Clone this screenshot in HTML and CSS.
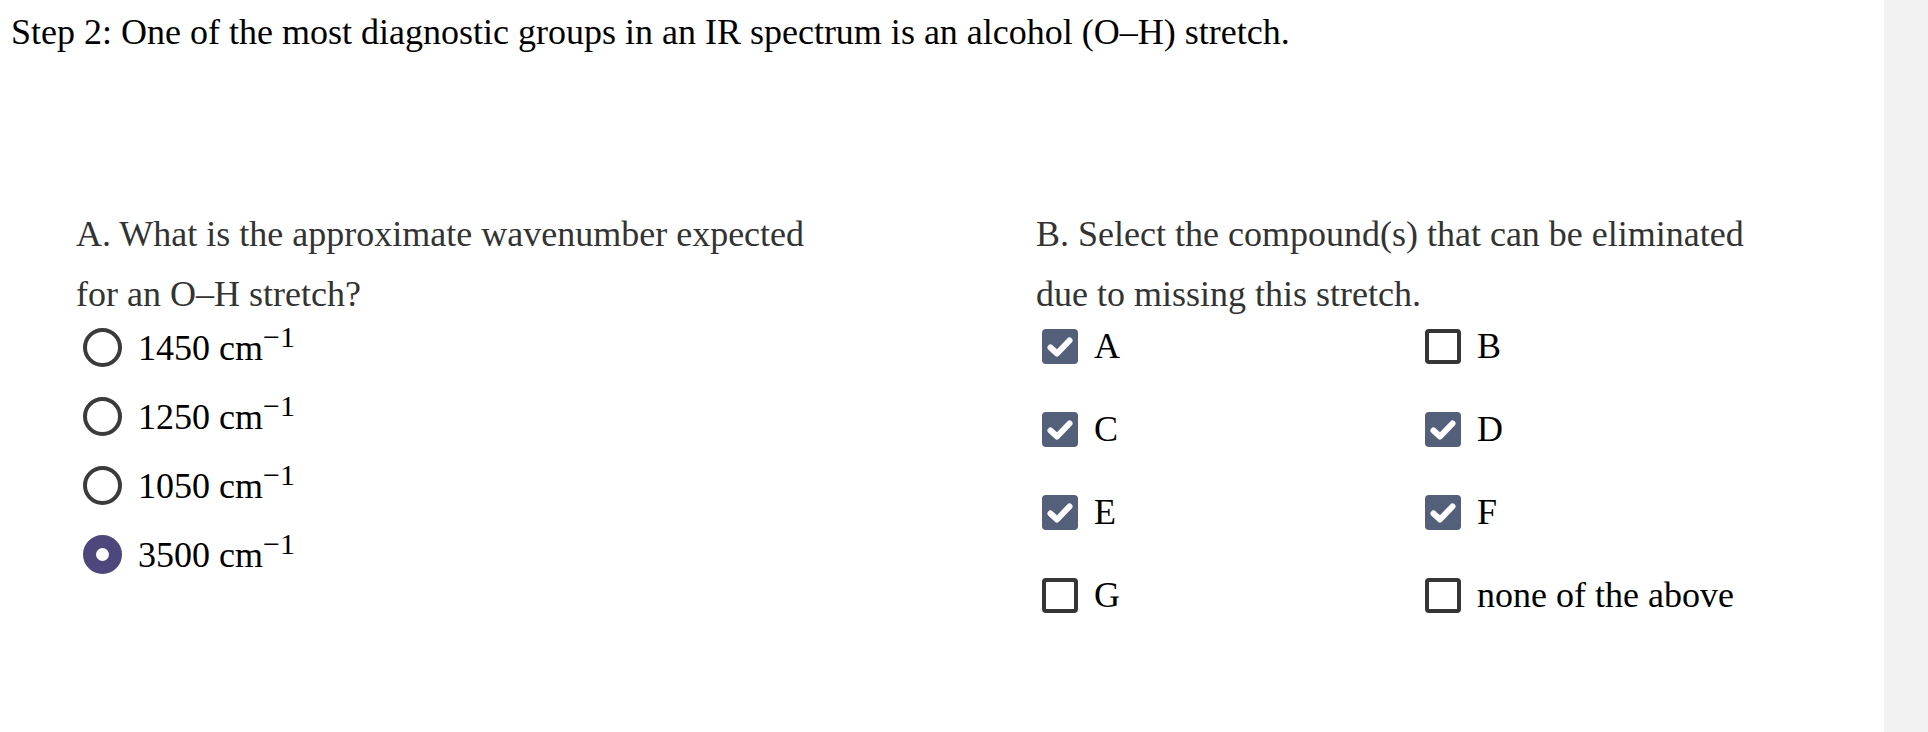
FILE: index.html
```html
<!DOCTYPE html>
<html lang="en">
<head>
    <meta charset="UTF-8">
    <title>Step 2 - IR spectrum</title>
    <link rel="stylesheet" href="styles.css">
</head>
<body>
    <div class="page">
        <main class="content">
            <h2 class="step">Step 2: One of the most diagnostic groups in an IR spectrum is an alcohol (O–H) stretch.</h2>

            <div class="parts">
                <section class="part">
                    <p class="prompt">A. What is the approximate wavenumber expected for an O–H stretch?</p>
                    <ul class="radios">
                        <li class="option"><span class="radio"></span><span class="label">1450 cm<sup>−1</sup></span></li>
                        <li class="option"><span class="radio"></span><span class="label">1250 cm<sup>−1</sup></span></li>
                        <li class="option"><span class="radio"></span><span class="label">1050 cm<sup>−1</sup></span></li>
                        <li class="option"><span class="radio selected"></span><span class="label">3500 cm<sup>−1</sup></span></li>
                    </ul>
                </section>

                <section class="part">
                    <p class="prompt">B. Select the compound(s) that can be eliminated due to missing this stretch.</p>
                    <ul class="checks">
                        <li class="option check-option">
                            <span class="box checked"><svg viewBox="0 0 36 35"><path d="M8.5 18.5 L15 24.5 L27.5 11.5"/></svg></span>
                            <span class="label">A</span>
                        </li>
                        <li class="option check-option">
                            <span class="box"></span>
                            <span class="label">B</span>
                        </li>
                        <li class="option check-option">
                            <span class="box checked"><svg viewBox="0 0 36 35"><path d="M8.5 18.5 L15 24.5 L27.5 11.5"/></svg></span>
                            <span class="label">C</span>
                        </li>
                        <li class="option check-option">
                            <span class="box checked"><svg viewBox="0 0 36 35"><path d="M8.5 18.5 L15 24.5 L27.5 11.5"/></svg></span>
                            <span class="label">D</span>
                        </li>
                        <li class="option check-option">
                            <span class="box checked"><svg viewBox="0 0 36 35"><path d="M8.5 18.5 L15 24.5 L27.5 11.5"/></svg></span>
                            <span class="label">E</span>
                        </li>
                        <li class="option check-option">
                            <span class="box checked"><svg viewBox="0 0 36 35"><path d="M8.5 18.5 L15 24.5 L27.5 11.5"/></svg></span>
                            <span class="label">F</span>
                        </li>
                        <li class="option check-option">
                            <span class="box"></span>
                            <span class="label">G</span>
                        </li>
                        <li class="option check-option">
                            <span class="box"></span>
                            <span class="label">none of the above</span>
                        </li>
                    </ul>
                </section>
            </div>
        </main>
        <aside class="rail"></aside>
    </div>
</body>
</html>
```

FILE: styles.css
```css
html, body { margin: 0; padding: 0; background: #fff; }
body { font-family: "Liberation Serif", "Times New Roman", serif; font-size: 36px; color: #000; }

.page { display: flex; min-height: 100vh; }
.content { flex: 1; }
.rail { width: 44px; background: #f2f2f2; }

.step { margin: 0; padding: 11px 0 0 11px; font-size: 36px; font-weight: normal; line-height: normal; }

.parts { display: grid; grid-template-columns: 960px 1fr; padding: 0 0 0 76px; margin-top: 151px; }

.prompt { margin: 0; max-width: 745px; line-height: 60px; color: #333; }

ul { list-style: none; margin: 0; padding: 0; }

.option { display: flex; align-items: center; }
.label { line-height: normal; }
sup { line-height: 0; font-size: 30px; }

/* radios */
.radios { margin-top: -11px; }
.radios .option { height: 69px; padding-left: 7px; gap: 16px; }
.radio { box-sizing: border-box; width: 39px; height: 39px; border: 4px solid #3b3b3b; border-radius: 50%; background: #fff; flex: none; }
.radio.selected { border: 13px solid #4e477c; }

/* checkboxes */
.checks { display: grid; grid-template-columns: 383px 383px; grid-auto-rows: 40px; row-gap: 43px; margin-top: 2px; padding-left: 6px; }
.check-option { gap: 16px; }
.box { box-sizing: border-box; width: 36px; height: 35px; border: 4px solid #353535; border-radius: 4px; background: #fff; flex: none; }
.box.checked { border: none; background: #546079; }
.box svg { display: block; width: 36px; height: 35px; }
.box path { fill: none; stroke: #fff; stroke-width: 6; stroke-linecap: round; stroke-linejoin: round; }
```
